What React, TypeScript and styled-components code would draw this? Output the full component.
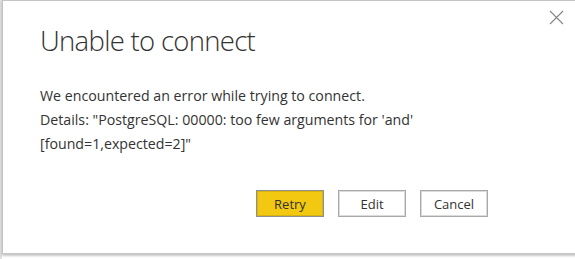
import React from 'react';
import styled, { createGlobalStyle } from 'styled-components';

const GlobalStyle = createGlobalStyle`
  html, body {
    margin: 0;
    padding: 0;
    background: #ffffff;
    overflow: hidden;
  }
  body {
    font-family: 'Open Sans', 'Noto Sans', 'Liberation Sans', sans-serif;
  }
`;

const Backdrop = styled.div`
  width: 575px;
  height: 259px;
  padding-left: 2px;
  box-sizing: border-box;
  background: linear-gradient(to right, #dedede 0 2px, #ffffff 2px);
  overflow: hidden;
`;

const Dialog = styled.section`
  position: relative;
  width: 600px;
  height: 254px;
  box-sizing: border-box;
  background: #ffffff;
  border: 1px solid #c4c4c4;
  box-shadow: 0 2px 2px rgba(0, 0, 0, 0.22);
  padding: 22px 0 0 37px;
  display: flex;
  flex-direction: column;
`;

const CloseButton = styled.button`
  position: absolute;
  top: 8px;
  right: 37px;
  width: 16px;
  height: 16px;
  padding: 0;
  border: 0;
  background: transparent;
  display: flex;
  align-items: center;
  justify-content: center;
`;

const Title = styled.h1`
  margin: 0;
  font-weight: 300;
  font-size: 27.5px;
  line-height: 36px;
  color: #333333;
  letter-spacing: -0.7px;
`;

const Message = styled.div`
  margin-top: 25px;
  font-size: 14.2px;
  line-height: 24px;
  color: #333333;
`;

const Line = styled.p`
  margin: 0;
`;

const Actions = styled.div`
  display: flex;
  gap: 14px;
  margin-top: 34px;
  padding-left: 216px;
`;

const Button = styled.button<{ $primary?: boolean }>`
  width: 68px;
  height: 27px;
  box-sizing: border-box;
  padding: 0;
  font-family: inherit;
  font-size: 13px;
  color: #333333;
  background: ${p => (p.$primary ? '#f2c811' : '#ffffff')};
  border: 1px solid ${p => (p.$primary ? '#8f8f8f' : '#a8a8a8')};
  box-shadow: inset 0 0 0 1px ${p => (p.$primary ? '#d9b30f' : '#dcdcdc')};
  cursor: pointer;
`;

function CloseIcon() {
  return (
    <svg width="15" height="15" viewBox="0 0 15 15">
      <path d="M1 1 L14 14 M14 1 L1 14" stroke="#858585" strokeWidth="1.1" fill="none" />
    </svg>
  );
}

export default function App() {
  return (
    <>
      <GlobalStyle />
      <Backdrop>
        <Dialog>
          <CloseButton aria-label="Close">
            <CloseIcon />
          </CloseButton>
          <Title>Unable to connect</Title>
          <Message>
            <Line>We encountered an error while trying to connect.</Line>
            <Line>Details: "PostgreSQL: 00000: too few arguments for 'and'</Line>
            <Line>[found=1,expected=2]"</Line>
          </Message>
          <Actions>
            <Button $primary>Retry</Button>
            <Button>Edit</Button>
            <Button>Cancel</Button>
          </Actions>
        </Dialog>
      </Backdrop>
    </>
  );
}
